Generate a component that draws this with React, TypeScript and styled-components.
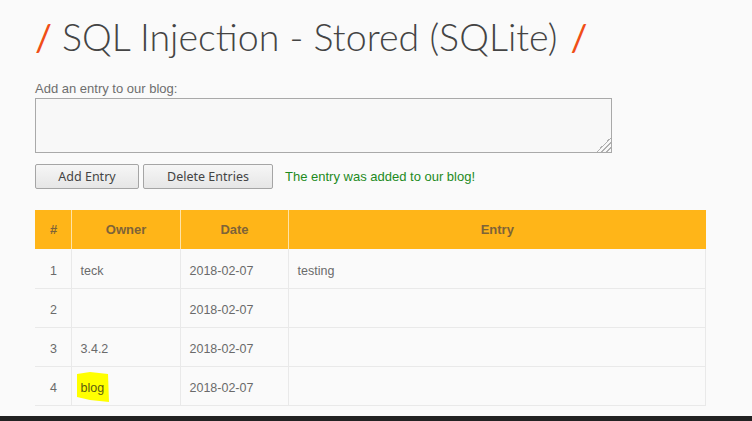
import React from "react";
import styled, { createGlobalStyle } from "styled-components";

const GlobalCss = createGlobalStyle`
    html, body {
        margin: 0;
        padding: 0;
        background: #fafafa;
    }
    body {
        font-family: "Liberation Sans", Arial, sans-serif;
        font-size: 13px;
        color: #666;
    }
`

const Page = styled.div`
    width: 752px;
    height: 421px;
    overflow: hidden;
    display: flex;
    flex-direction: column;
`

const Main = styled.main`
    flex: 1;
    padding: 0 46px 0 35px;
`

const Title = styled.h1`
    margin: 0;
    height: 78px;
    padding-top: 15px;
    box-sizing: border-box;
    font-family: "Lato", sans-serif;
    font-weight: 300;
    font-size: 37.6px;
    line-height: 44px;
    color: #444;
    white-space: nowrap;
    display: flex;
    gap: 10px;
`

const Slash = styled.span`
    color: #f04e16;
    font-weight: 400;
`

const TitleText = styled.span`
    margin-right: 3px;
`

const EntryForm = styled.form`
    display: block;
`

const Label = styled.label`
    display: block;
    height: 20px;
    padding-top: 1px;
    box-sizing: border-box;
    line-height: 19px;
    font-size: 13px;
    color: #6e6e6e;
`

const EntryBox = styled.textarea`
    display: block;
    width: 577px;
    height: 55px;
    box-sizing: border-box;
    margin: 0 0 11px;
    border: 1px solid #a9a9a9;
    background: #f8f8f8;
    outline: none;
    resize: both;
    &::-webkit-resizer {
        background:
            linear-gradient(135deg, #f8f8f8 50%, transparent 50%),
            repeating-linear-gradient(135deg, transparent 0 2.4px, #b0b0b0 2.4px 3.8px);
    }
`

const Actions = styled.div`
    display: flex;
    align-items: center;
    gap: 4px;
    height: 25px;
`

const Button = styled.button<{ $width: number }>`
    width: ${(p) => p.$width}px;
    height: 25px;
    padding: 0;
    border: 1px solid #a5a5a5;
    border-radius: 2px;
    background: linear-gradient(#f6f6f6, #e6e6e6);
    font-family: "Noto Sans", sans-serif;
    font-size: 12.5px;
    color: #444;
`

const Message = styled.span`
    margin-left: 8px;
    font-size: 13px;
    color: #1d8a1d;
`

const EntryTable = styled.table`
    width: 671px;
    margin-top: 21px;
    border-collapse: collapse;
    table-layout: fixed;
    font-size: 12.5px;
`

const HeadCell = styled.th<{ $width?: number }>`
    width: ${(p) => (p.$width ? `${p.$width}px` : "auto")};
    height: 39px;
    padding: 0;
    background: #ffb518;
    border-left: 1px solid #ffe3a6;
    color: #7d6338;
    font-size: 13px;
    font-weight: bold;
    text-align: center;
    &:first-child {
        border-left: none;
        padding-left: 1px;
    }
`

const Row = styled.tr`
    height: 39px;
    border-bottom: 1px solid #e9e9e9;
`

const Cell = styled.td<{ $center?: boolean }>`
    padding: 5px 0 0 ${(p) => (p.$center ? 1 : 8.5)}px;
    border-left: 1px solid #e9e9e9;
    border-right: 1px solid #e9e9e9;
    color: #6a6a6a;
    text-align: ${(p) => (p.$center ? "center" : "left")};
    &:first-child {
        border-left: none;
    }
`

const Marked = styled.span`
    position: relative;
    display: inline-block;
    z-index: 0;
    color: #5c5c10;
`

const MarkerStroke = styled.svg`
    position: absolute;
    left: -4px;
    top: -9px;
    width: 32px;
    height: 30px;
    z-index: -1;
`

const Footer = styled.footer`
    height: 5px;
    background: #222;
`

const rows = [
    { id: 1, owner: "teck", date: "2018-02-07", entry: "testing" },
    { id: 2, owner: "", date: "2018-02-07", entry: "" },
    { id: 3, owner: "3.4.2", date: "2018-02-07", entry: "" },
    { id: 4, owner: "blog", date: "2018-02-07", entry: "" },
]

const App: React.FC = () => {
    return <Page>
        <GlobalCss />
        <Main>
            <Title>
                <Slash>/</Slash>
                <TitleText>SQL Injection - Stored (SQLite)</TitleText>
                <Slash>/</Slash>
            </Title>
            <EntryForm>
                <Label htmlFor="entry">Add an entry to our blog:</Label>
                <EntryBox id="entry" />
                <Actions>
                    <Button type="button" $width={104}>Add Entry</Button>
                    <Button type="button" $width={130}>Delete Entries</Button>
                    <Message>The entry was added to our blog!</Message>
                </Actions>
            </EntryForm>
            <EntryTable>
                <thead>
                    <tr>
                        <HeadCell $width={35}>#</HeadCell>
                        <HeadCell $width={108}>Owner</HeadCell>
                        <HeadCell $width={107}>Date</HeadCell>
                        <HeadCell>Entry</HeadCell>
                    </tr>
                </thead>
                <tbody>
                    {rows.map((r) => <Row key={r.id}>
                        <Cell $center>{r.id}</Cell>
                        <Cell>
                            {r.owner === "blog"
                                ? <Marked>
                                    <MarkerStroke viewBox="0 0 32 30">
                                        <path d="M0 2 L13 0 L31 2 L32 30 L13 28 L0 25 Z" fill="#ffff00" />
                                    </MarkerStroke>
                                    {r.owner}
                                </Marked>
                                : r.owner}
                        </Cell>
                        <Cell>{r.date}</Cell>
                        <Cell>{r.entry}</Cell>
                    </Row>)}
                </tbody>
            </EntryTable>
        </Main>
        <Footer />
    </Page>
}

export default App;
